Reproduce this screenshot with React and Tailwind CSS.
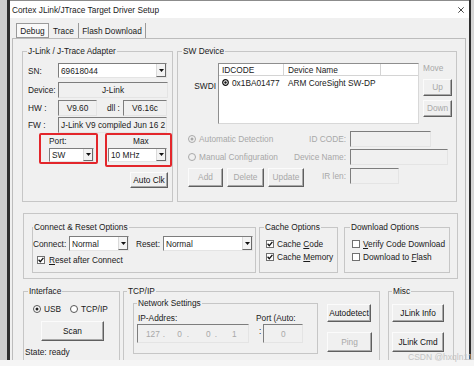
import React from 'react';

const fieldCls =
  'border border-t-[#7d7d7d] border-l-[#7d7d7d] border-r-[#e4e4e4] border-b-[#e4e4e4]';

function Group({ title, className = '', tl = 'left-[4px]', children }) {
  return (
    <div className={`relative shrink-0 border border-[#c6c6c6] ${className}`}>
      <span className={`absolute -top-[7px] ${tl} bg-[#f0f0f0] px-[1px] leading-[12px] whitespace-nowrap`}>
        {title}
      </span>
      {children}
    </div>
  );
}

function Btn({ children, className = '', disabled }) {
  return (
    <div
      className={`shrink-0 flex items-center justify-center bg-[#f0f0f0] border border-t-[#fbfbfb] border-l-[#fbfbfb] border-r-[#5f5f5f] border-b-[#5f5f5f] shadow-[inset_-1px_-1px_0_#a9a9a9] leading-none whitespace-nowrap ${
        disabled ? 'text-[#a8a8a8]' : 'text-[#111]'
      } ${className}`}
    >
      {children}
    </div>
  );
}

function Combo({ value, className = '' }) {
  return (
    <div className={`shrink-0 flex items-stretch bg-white ${fieldCls} ${className}`}>
      <span className="flex-1 flex items-center pl-[2px] whitespace-nowrap overflow-hidden">{value}</span>
      <div className="w-[10px] shrink-0 flex items-center justify-center bg-[#f3f3f3] border-l border-l-[#dadada] border-r border-b border-r-[#6a6a6a] border-b-[#6a6a6a]">
        <svg width="5" height="3" viewBox="0 0 5 3">
          <path d="M0 0h5L2.5 3z" fill="#111" />
        </svg>
      </div>
    </div>
  );
}

function Check({ checked }) {
  return (
    <span className="w-[8px] h-[8px] shrink-0 border border-[#707070] bg-white flex items-center justify-center">
      {checked && (
        <svg width="6" height="6" viewBox="0 0 6 6">
          <path d="M0.6 2.8l1.7 1.9L5.4 0.9" stroke="#111" strokeWidth="1.3" fill="none" />
        </svg>
      )}
    </span>
  );
}

function Radio({ on, disabled }) {
  const c = disabled ? '#a8a8a8' : '#555';
  return (
    <svg width="8" height="8" viewBox="0 0 8 8" className="shrink-0">
      <circle cx="4" cy="4" r="3.5" fill={disabled ? '#f0f0f0' : '#fff'} stroke={c} />
      {on && <circle cx="4" cy="4" r="1.5" fill={disabled ? '#a8a8a8' : '#222'} />}
    </svg>
  );
}

export default function App() {
  return (
    <div className="relative flex w-[474px] h-[366px] overflow-hidden bg-[#f5f5f5] font-['Liberation_Sans',Arial,sans-serif] text-[8.3px] leading-[12px] text-[#1a1a1a]">
      <div className="w-[7px] h-[360px] shrink-0 bg-[#cdcdcd]" />

      <div className="w-[464px] h-[360px] shrink-0 flex flex-col border-l-[3px] border-r-2 border-[#2e2e2e] bg-[#f0f0f0]">
        {/* title bar */}
        <div className="h-[18px] shrink-0 flex items-center justify-between bg-white border-t border-[#8c8c8c] pl-[2px] pr-[5px]">
          <span>Cortex JLink/JTrace Target Driver Setup</span>
          <svg width="6" height="6" viewBox="0 0 6 6">
            <path d="M0.3 0.3l5.4 5.4M5.7 0.3l-5.4 5.4" stroke="#333" strokeWidth="0.9" />
          </svg>
        </div>

        <div className="flex-1 flex flex-col pt-[5px] min-h-0">
          {/* tabs */}
          <div className="flex h-[15px] ml-[6px] shrink-0">
            <div className="w-[33px] flex items-center justify-center border border-[#9a9a9a] bg-[#f9f9f9]">Debug</div>
            <div className="w-[30px] flex items-center justify-center border-r border-[#9a9a9a]">Trace</div>
            <div className="w-[67px] flex items-center justify-center border-r border-[#9a9a9a]">Flash Download</div>
          </div>

          {/* tab panel */}
          <div className="flex-1 min-h-0 overflow-hidden ml-[2px] w-[454px] border-t border-l border-r border-[#bcbcbc] flex flex-col">
            <div className="flex mt-[12px] ml-[9px] shrink-0">
              {/* J-Link adapter */}
              <Group title="J-Link / J-Trace Adapter" className="w-[151px] h-[151px]">
                <div className="flex flex-col pl-[5px] pt-[11px]">
                  <div className="flex items-center h-[15px]">
                    <span className="w-[30px]">SN:</span>
                    <Combo value="69618044" className="w-[109px] h-[15px]" />
                  </div>
                  <div className="flex items-center h-[16px] mt-[4px]">
                    <span className="w-[30px]">Device:</span>
                    <div className={`w-[110px] h-[16px] flex items-center justify-center ${fieldCls}`}>J-Link</div>
                  </div>
                  <div className="flex items-center h-[16px] mt-[2px]">
                    <span className="w-[30px]">HW :</span>
                    <div className={`w-[39px] h-[16px] flex items-center justify-center ${fieldCls}`}>V9.60</div>
                    <span className="ml-[10px] w-[16px] whitespace-nowrap">dll :</span>
                    <div className={`w-[44px] h-[16px] flex items-center justify-center ${fieldCls}`}>V6.16c</div>
                  </div>
                  <div className="flex items-center h-[16px] mt-[1px]">
                    <span className="w-[30px]">FW :</span>
                    <div className={`w-[109px] h-[16px] flex items-center pl-[2px] overflow-hidden whitespace-nowrap ${fieldCls}`}>
                      J-Link V9 compiled Jun 16 2
                    </div>
                  </div>
                  <div className="flex items-start">
                    <div className="ml-[11px] w-[59px] h-[31px] border-2 border-[#e3262b] rounded-[2px] flex flex-col pl-[8px]">
                      <span>Port:</span>
                      <Combo value="SW" className="w-[45px] h-[14px] mt-[1px]" />
                    </div>
                    <div className="ml-[7px] w-[67px] h-[34px] border-2 border-[#e3262b] rounded-[2px] flex flex-col pl-[1px]">
                      <span className="pl-[25px]">Max</span>
                      <Combo value="10 MHz" className="w-[59px] h-[14px] mt-[1px]" />
                    </div>
                  </div>
                  <Btn className="ml-[102px] mt-[5px] w-[38px] h-[16px]">Auto Clk</Btn>
                </div>
              </Group>

              {/* SW device */}
              <Group title="SW Device" className="ml-[4px] w-[280px] h-[151px]">
                <div className="flex flex-col pt-[11px]">
                  <div className="flex items-start h-[61px]">
                    <span className="w-[40px] pt-[17px] pr-[2px] text-right">SWDI</span>
                    <div className="w-[201px] h-[61px] bg-white border border-[#8e8e8e] border-r-[#d8d8d8] border-b-[#d8d8d8] flex flex-col">
                      <div className="flex h-[12px] border-b border-[#d4d4d4]">
                        <span className="w-[65px] h-full pl-[3px] border-r border-[#d4d4d4] flex items-center">IDCODE</span>
                        <span className="w-[97px] h-full pl-[4px] border-r border-[#d4d4d4] flex items-center">Device Name</span>
                      </div>
                      <div className="flex items-center h-[13px]">
                        <span className="w-[65px] pl-[3px] flex items-center gap-[3px]">
                          <svg width="7" height="7" viewBox="0 0 7 7" className="shrink-0">
                            <circle cx="3.5" cy="3.5" r="2.8" fill="#fff" stroke="#111" strokeWidth="1.2" />
                            <circle cx="3.5" cy="3.5" r="1.2" fill="#111" />
                          </svg>
                          0x1BA01477
                        </span>
                        <span className="pl-[4px] whitespace-nowrap">ARM CoreSight SW-DP</span>
                      </div>
                    </div>
                    <div className="ml-[4px] flex flex-col text-[#a8a8a8]">
                      <span className="leading-[10px] h-[10px]">Move</span>
                      <Btn disabled className="mt-[6px] w-[29px] h-[17px]">Up</Btn>
                      <Btn disabled className="mt-[4px] w-[29px] h-[17px]">Down</Btn>
                    </div>
                  </div>

                  <div className="flex items-center h-[16px] mt-[7px] text-[#a8a8a8]">
                    <div className="w-[128px] pl-[10px] flex items-center gap-[3px] whitespace-nowrap">
                      <Radio on disabled />
                      Automatic Detection
                    </div>
                    <div className="w-[40px] flex justify-end whitespace-nowrap">ID CODE:</div>
                    <div className={`ml-[4px] w-[81px] h-[16px] ${fieldCls}`} />
                  </div>
                  <div className="flex items-center h-[16px] mt-[2px] text-[#a8a8a8]">
                    <div className="w-[128px] pl-[10px] flex items-center gap-[3px] whitespace-nowrap">
                      <Radio disabled />
                      Manual Configuration
                    </div>
                    <div className="w-[40px] flex justify-end whitespace-nowrap">Device Name:</div>
                    <div className={`ml-[4px] w-[98px] h-[16px] ${fieldCls}`} />
                  </div>
                  <div className="flex items-start mt-[3px] text-[#a8a8a8]">
                    <div className="w-[128px] pl-[10px] flex">
                      <Btn disabled className="w-[35px] h-[19px]">Add</Btn>
                      <Btn disabled className="ml-[4px] w-[37px] h-[19px]">Delete</Btn>
                      <Btn disabled className="ml-[4px] w-[36px] h-[19px]">Update</Btn>
                    </div>
                    <div className="w-[40px] h-[16px] flex items-center justify-end whitespace-nowrap">IR len:</div>
                    <div className={`ml-[4px] w-[49px] h-[16px] ${fieldCls}`} />
                  </div>
                </div>
              </Group>
            </div>

            {/* connect / cache / download */}
            <div className="mt-[11px] ml-[10px] w-[435px] h-[66px] shrink-0 border border-[#c6c6c6] flex items-start pt-[13px] pl-[8px]">
              <Group title="Connect & Reset Options" tl="left-0" className="w-[224px] h-[46px]">
                <div className="flex flex-col pt-[8px]">
                  <div className="flex items-center h-[15px]">
                    <span className="w-[36px]">Connect:</span>
                    <Combo value="Normal" className="w-[60px] h-[15px]" />
                    <span className="ml-[7px] w-[27px]">Reset:</span>
                    <Combo value="Normal" className="w-[90px] h-[15px]" />
                  </div>
                  <div className="flex items-center gap-[4px] mt-[3px] pl-[4px] h-[12px]">
                    <Check checked />
                    <span>
                      <span className="underline">R</span>eset after Connect
                    </span>
                  </div>
                </div>
              </Group>

              <Group title="Cache Options" className="ml-[3px] w-[79px] h-[46px]">
                <div className="flex flex-col pt-[9px] pl-[6px]">
                  <div className="flex items-center gap-[3px] h-[13px] whitespace-nowrap">
                    <Check checked />
                    <span>
                      Cache <span className="underline">C</span>ode
                    </span>
                  </div>
                  <div className="flex items-center gap-[3px] h-[13px] whitespace-nowrap">
                    <Check checked />
                    <span>
                      Cache <span className="underline">M</span>emory
                    </span>
                  </div>
                </div>
              </Group>

              <Group title="Download Options" tl="left-[5px]" className="ml-[6px] w-[106px] h-[46px]">
                <div className="flex flex-col pt-[9px] pl-[7px] w-full">
                  <div className="flex items-center gap-[3px] h-[13px] whitespace-nowrap">
                    <Check />
                    <span>
                      <span className="underline">V</span>erify Code Download
                    </span>
                  </div>
                  <div className="flex items-center gap-[3px] h-[13px] whitespace-nowrap">
                    <Check />
                    <span>
                      Download to <span className="underline">F</span>lash
                    </span>
                  </div>
                </div>
              </Group>
            </div>

            {/* interface / tcp / misc */}
            <div className="flex mt-[12px] ml-[10px] shrink-0">
              <Group title="Interface" className="w-[97px] h-[80px]">
                <div className="flex flex-col pt-[11px]">
                  <div className="flex items-center h-[12px] pl-[9px]">
                    <div className="w-[37px] flex items-center gap-[3px]">
                      <Radio on />
                      USB
                    </div>
                    <div className="flex items-center gap-[3px]">
                      <Radio />
                      TCP/IP
                    </div>
                  </div>
                  <Btn className="ml-[17px] mt-[6px] w-[63px] h-[20px]">Scan</Btn>
                  <span className="mt-[5px] pl-[1px]">State: ready</span>
                </div>
              </Group>

              <Group title="TCP/IP" tl="left-[3px]" className="ml-[3px] w-[257px] h-[80px]">
                <div className="flex pt-[11px] pl-[9px]">
                  <Group title="Network Settings" tl="left-[3px]" className="w-[185px] h-[51px]">
                    <div className="flex flex-col pt-[8px] pl-[3px]">
                      <div className="flex h-[12px] items-center whitespace-nowrap">
                        <span className="w-[119px] pl-[1px]">IP-Addres:</span>
                        <span>Port (Auto:</span>
                      </div>
                      <div className="flex items-start">
                        <div className={`w-[112px] h-[19px] flex items-center text-[#a8a8a8] ${fieldCls}`}>
                          <span className="ml-[8px]">127</span>
                          <span className="ml-[3px]">.</span>
                          <span className="ml-[12px]">0</span>
                          <span className="ml-[5px]">.</span>
                          <span className="ml-[17px]">0</span>
                          <span className="ml-[4px]">.</span>
                          <span className="ml-[15px]">1</span>
                        </div>
                        <span className="ml-[10px] mt-[1px]">:</span>
                        <div className={`ml-[2px] w-[40px] h-[19px] flex items-center justify-center text-[#a8a8a8] ${fieldCls}`}>
                          0
                        </div>
                      </div>
                    </div>
                  </Group>
                  <div className="ml-[9px] flex flex-col">
                    <Btn className="mt-[1px] w-[44px] h-[18px]">Autodetect</Btn>
                    <Btn disabled className="mt-[10px] w-[45px] h-[20px]">Ping</Btn>
                  </div>
                </div>
              </Group>

              <Group title="Misc" tl="left-[3px]" className="ml-[8px] w-[66px] h-[80px]">
                <div className="flex flex-col pt-[12px] pl-[3px]">
                  <Btn className="w-[52px] h-[18px]">JLink Info</Btn>
                  <Btn className="mt-[10px] w-[52px] h-[20px]">JLink Cmd</Btn>
                </div>
              </Group>
            </div>
          </div>
        </div>
      </div>

      <div className="flex-1 h-[360px] bg-[#d6d6d6]" />

      <span className="absolute left-[408px] top-[351px] text-[8.5px] leading-[12px] text-[#c4c4c4] whitespace-nowrap">
        CSDN @hxqln11
      </span>
    </div>
  );
}
